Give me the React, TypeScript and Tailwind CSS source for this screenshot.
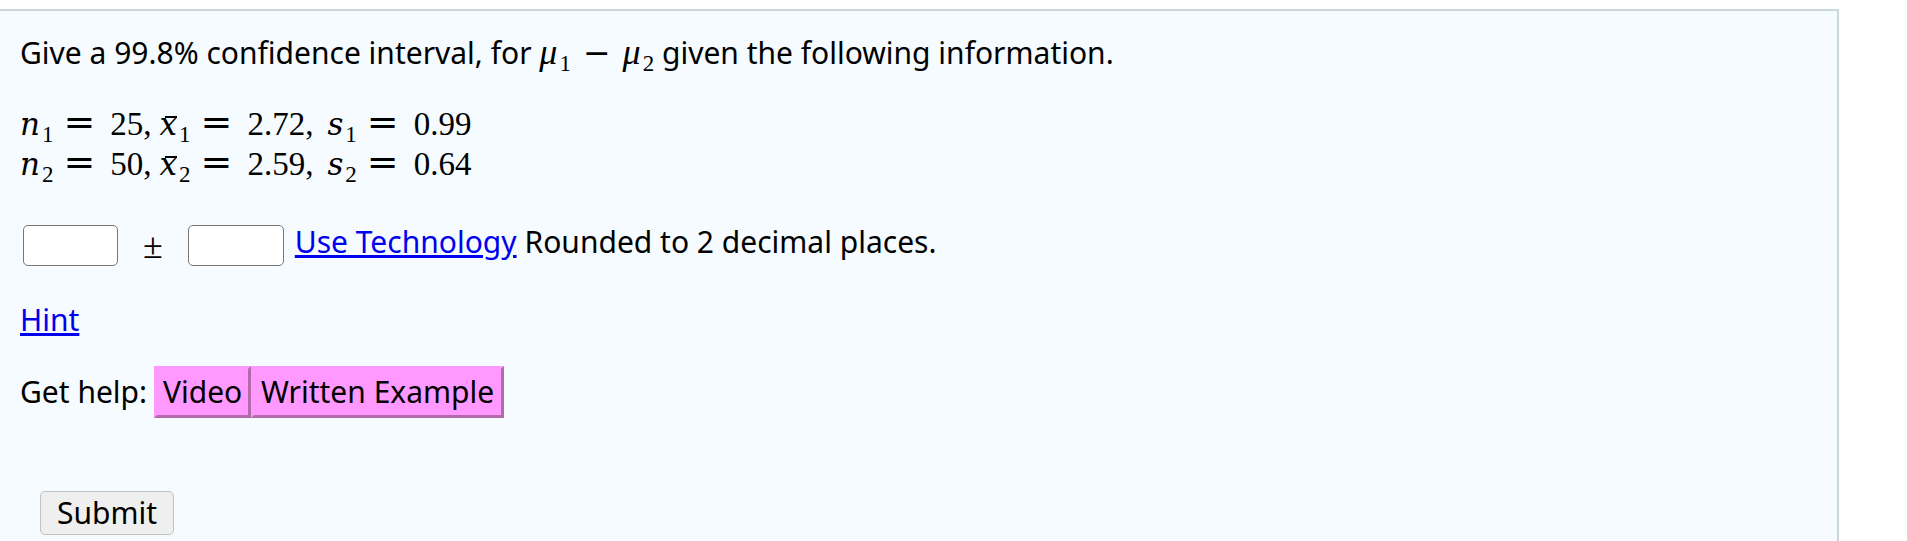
import React from "react";

const sans = { fontFamily: '"Noto Sans", "Open Sans", sans-serif' };
const serif = { fontFamily: '"Liberation Serif", "DejaVu Serif", serif' };
const dvSerif = { fontFamily: '"DejaVu Serif", "Liberation Serif", serif' };

function Sub({ children }: { children: React.ReactNode }) {
  return (
    <span className="relative top-[7px] ml-[2px] text-[23px] not-italic" style={serif}>
      {children}
    </span>
  );
}

function Var({ children }: { children: React.ReactNode }) {
  return (
    <span className="text-[31px] italic" style={dvSerif}>
      {children}
    </span>
  );
}

function XBar({ sub }: { sub: string }) {
  return (
    <span className="relative inline-block">
      <Var>x</Var>
      <span className="absolute left-[5px] top-[12px] h-[2px] w-[12px] bg-black" />
      <Sub>{sub}</Sub>
    </span>
  );
}

function Eq() {
  return (
    <span className="ml-[10px] mr-[15px] text-[38px] leading-[30px]" style={dvSerif}>
      =
    </span>
  );
}

function MathRow({ i, n, x, s }: { i: string; n: string; x: string; s: string }) {
  return (
    <div className="h-[40px]">
      <Var>n</Var>
      <Sub>{i}</Sub>
      <Eq />
      {n},
      <span className="ml-[8px]" />
      <XBar sub={i} />
      <Eq />
      {x},
      <span className="ml-[14px]" />
      <Var>s</Var>
      <Sub>{i}</Sub>
      <Eq />
      {s}
    </div>
  );
}

export default function App() {
  return (
    <div className="min-h-screen bg-white" style={sans}>
      <div className="mt-[9px] mr-[68px] h-[532px] border-t-2 border-r-2 border-[#c9d8df] bg-[#f5fbfe] pl-[20px] pt-[21px] text-[30px] text-black">
        <div className="h-[40px] leading-[40px] whitespace-nowrap">
          Give a 99.8% confidence interval, for{" "}
          <span className="text-[36px]" style={serif}>
            <span className="italic">μ</span>
            <Sub>1</Sub>
            <span className="mx-[12px] text-[33px] leading-[30px]" style={dvSerif}>
              −
            </span>
            <span className="italic">μ</span>
            <Sub>2</Sub>
          </span>{" "}
          given the following information.
        </div>

        <div className="mt-[32px] text-[33px] leading-[40px] whitespace-nowrap" style={serif}>
          <MathRow i="1" n="25" x="2.72" s="0.99" />
          <MathRow i="2" n="50" x="2.59" s="0.64" />
        </div>

        <div className="mt-[41px] flex h-[41px] items-start whitespace-nowrap leading-[40px]">
          <input
            type="text"
            className="ml-[3px] h-[41px] w-[95px] rounded-[5px] border border-[#767676] bg-white"
          />
          <span className="mx-[25px] mt-[1px] text-[36px] leading-[40px]" style={serif}>
            ±
          </span>
          <input
            type="text"
            className="h-[41px] w-[96px] rounded-[5px] border border-[#767676] bg-white"
          />
          <a href="#" className="ml-[11px] mt-[-3px] text-[#0000ee] underline">
            Use Technology
          </a>
          <span className="ml-[8px] mt-[-3px]">Rounded to 2 decimal places.</span>
        </div>

        <div className="mt-[34px] h-[40px] leading-[40px]">
          <a href="#" className="text-[#0000ee] underline">
            Hint
          </a>
        </div>

        <div className="mt-[26px] flex h-[52px] items-center whitespace-nowrap leading-[40px]">
          <span>Get help:</span>
          <button className="ml-[7px] h-[52px] w-[97px] border-[3px] border-t-[#ff99ff] border-l-[#ff99ff] border-b-[#b36aa9] border-r-[#b36aa9] bg-[#ff99ff] text-[30px]">
            Video
          </button>
          <button className="h-[52px] w-[253px] border-[3px] border-t-[#ff99ff] border-l-[#ff99ff] border-b-[#b36aa9] border-r-[#b36aa9] bg-[#ff99ff] text-[30px]">
            Written Example
          </button>
        </div>

        <div className="mt-[73px] flex">
          <button className="ml-[20px] h-[44px] w-[134px] rounded-[5px] border border-[#c2c2c2] bg-[#efefef] text-[30px] leading-[40px]">
            Submit
          </button>
        </div>
      </div>
    </div>
  );
}
